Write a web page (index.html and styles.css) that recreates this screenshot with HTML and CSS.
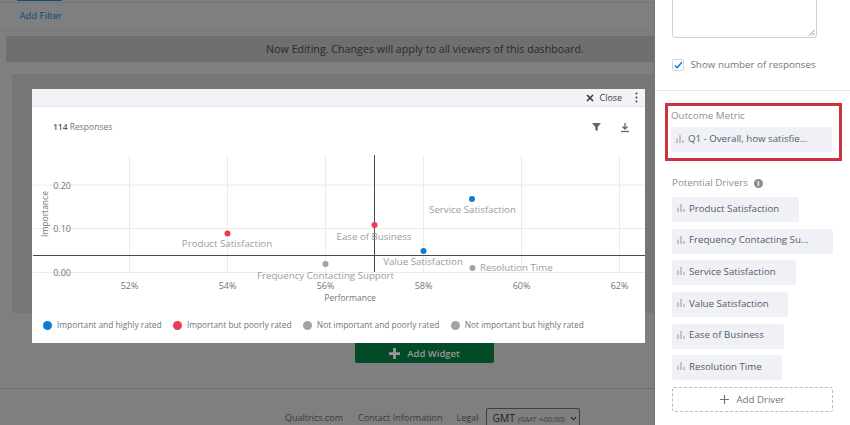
FILE: index.html
```html
<!DOCTYPE html>
<html lang="en">
<head>
<meta charset="utf-8">
<title>Dashboard</title>
<link rel="stylesheet" href="styles.css">
</head>
<body>
<div class="page">
  <main class="main">
    <div class="topline"><span class="tab"></span></div>
    <div class="filterbar"><a class="addfilter">Add Filter</a></div>
    <div class="banner">Now Editing. Changes will apply to all viewers of this dashboard.</div>
    <div class="canvas"></div>
    <div class="addrow">
      <div class="addwidget">
        <svg class="addplus" viewBox="0 0 12 12"><path d="M6 0v12M0 6h12" /></svg>
        <span>Add Widget</span>
      </div>
    </div>
    <footer class="footer">
      <span class="flink">Qualtrics.com</span>
      <span class="flink">Contact Information</span>
      <span class="flink">Legal</span>
      <span class="tz"><span class="tzmain">GMT</span> <i class="tzsub">(GMT +00:00)</i>
        <svg class="tzchev" viewBox="0 0 8 5"><path d="M1 1l3 3 3-3"/></svg>
      </span>
    </footer>
    <section class="modal">
      <div class="modalhead">
        <svg class="xicon" viewBox="0 0 8 8"><path d="M1 1l6 6M7 1l-6 6"/></svg>
        <span class="closetxt">Close</span>
        <svg class="kebab" viewBox="0 0 3 11"><circle cx="1.5" cy="1.5" r="1"/><circle cx="1.5" cy="5.5" r="1"/><circle cx="1.5" cy="9.5" r="1"/></svg>
      </div>
      <div class="modalsub">
        <span class="resp"><b>114</b> Responses</span>
        <svg class="funnel" viewBox="0 0 10 10"><path d="M0 1h9L5.7 5v4L3.300 8V5z"/></svg>
        <svg class="dl" viewBox="0 0 10 11"><path d="M5 1v5.500M2.500 4.500L5 7l2.500-2.500" class="dlarrow"/><path d="M1 9.500h8" class="dlarrow"/></svg>
      </div>
      <svg class="chart" width="613" height="175" viewBox="32 143 613 175">
        <g class="grid">
          <path d="M129.500 155V272M227.500 155V272M325.500 155V272M423.500 155V272M521.500 155V272M619.500 155V272"/>
          <path d="M33 185H645M33 228.500H645M33 272.500H645"/>
        </g>
        <g class="ticky">
          <text x="71" y="189" text-anchor="end">0.20</text>
          <text x="71" y="232" text-anchor="end">0.10</text>
          <text x="71" y="276" text-anchor="end">0.00</text>
        </g>
        <g class="ticky tickx">
          <text x="129.500" y="289" text-anchor="middle">52%</text>
          <text x="227.500" y="289" text-anchor="middle">54%</text>
          <text x="325.500" y="289" text-anchor="middle">56%</text>
          <text x="423.500" y="289" text-anchor="middle">58%</text>
          <text x="521.500" y="289" text-anchor="middle">60%</text>
          <text x="619.500" y="289" text-anchor="middle">62%</text>
        </g>
        <text class="axis" x="350" y="301" text-anchor="middle">Performance</text>
        <text class="axis" transform="translate(48 214) rotate(-90)" text-anchor="middle">Importance</text>
        <path class="cross" d="M33 255.500H645M374.500 155V272"/>
        <g class="pointlabels">
          <text x="472.500" y="213" text-anchor="middle">Service Satisfaction</text>
          <text x="227" y="247" text-anchor="middle">Product Satisfaction</text>
          <text x="374" y="240" text-anchor="middle">Ease of Business</text>
          <text x="423" y="265" text-anchor="middle">Value Satisfaction</text>
          <text x="325.500" y="279" text-anchor="middle">Frequency Contacting Support</text>
          <text x="480" y="271">Resolution Time</text>
        </g>
        <circle class="pblue" cx="472" cy="199" r="3"/>
        <circle class="pred" cx="227.500" cy="233.500" r="3"/>
        <circle class="pred" cx="374.500" cy="225" r="3"/>
        <circle class="pblue" cx="423.500" cy="251" r="3"/>
        <circle class="pgrey" cx="325.500" cy="264" r="3"/>
        <circle class="pgrey" cx="472.500" cy="268" r="3"/>
      </svg>
      <ul class="legend">
        <li class="litem"><span class="dot dblue"></span>Important and highly rated</li>
        <li class="litem"><span class="dot dred"></span>Important but poorly rated</li>
        <li class="litem"><span class="dot dgrey"></span>Not important and poorly rated</li>
        <li class="litem"><span class="dot dgrey"></span>Not important but highly rated</li>
      </ul>
    </section>
  </main>
  <aside class="side">
    <div class="sidetop">
      <div class="textarea">
        <svg class="grip" viewBox="0 0 7 7"><path d="M6.500 1L1 6.500M6.500 4L4 6.500"/></svg>
      </div>
      <label class="check">
        <span class="box"><svg viewBox="0 0 10 9"><path d="M1 5l2.500 2.500L9 1"/></svg></span>
        Show number of responses
      </label>
    </div>
    <div class="sidebody">
      <div class="outcome">
        <div class="seclabel">Outcome Metric</div>
        <div class="chip chip-full"><svg class="bars" viewBox="0 0 8 8"><path d="M1 3.500V8M4 0V8M7 5V8"/></svg>Q1 - Overall, how satisfie...</div>
      </div>
      <div class="drivers">
        <div class="seclabel">Potential Drivers <span class="info">i</span></div>
        <div class="chip w128"><svg class="bars" viewBox="0 0 8 8"><path d="M1 3.500V8M4 0V8M7 5V8"/></svg>Product Satisfaction</div>
        <div class="chip chip-full"><svg class="bars" viewBox="0 0 8 8"><path d="M1 3.500V8M4 0V8M7 5V8"/></svg>Frequency Contacting Su...</div>
        <div class="chip w125"><svg class="bars" viewBox="0 0 8 8"><path d="M1 3.500V8M4 0V8M7 5V8"/></svg>Service Satisfaction</div>
        <div class="chip w117"><svg class="bars" viewBox="0 0 8 8"><path d="M1 3.500V8M4 0V8M7 5V8"/></svg>Value Satisfaction</div>
        <div class="chip w112"><svg class="bars" viewBox="0 0 8 8"><path d="M1 3.500V8M4 0V8M7 5V8"/></svg>Ease of Business</div>
        <div class="chip w110"><svg class="bars" viewBox="0 0 8 8"><path d="M1 3.500V8M4 0V8M7 5V8"/></svg>Resolution Time</div>
        <div class="adddriver"><svg class="plus" viewBox="0 0 9 9"><path d="M4.500 0v9M0 4.500h9"/></svg>Add Driver</div>
      </div>
    </div>
  </aside>
</div>
</body>
</html>
```
FILE: styles.css
```css
* { box-sizing: border-box; }
html, body { margin: 0; padding: 0; }
body {
  width: 850px;
  height: 425px;
  overflow: hidden;
  font-family: "Open Sans", "Liberation Sans", sans-serif;
  color: #525c66;
}
.page { display: flex; width: 850px; height: 425px; }

/* Dimmed dashboard */
.main {
  position: relative;
  width: 655px;
  height: 425px;
  background: #7f7f7f;
  display: flex;
  flex-direction: column;
  border-right: 1px solid #757575;
}
.topline { height: 3px; border-bottom: 1px solid #757575; flex: none; }
.tab { display: block; width: 45px; height: 1px; margin-left: 17px; background: #0d4f80; }
.filterbar {
  height: 28px;
  flex: none;
  padding: 1px 0 0 19.500px;
  border-bottom: 1px solid #787878;
  font-size: 9.500px;
  line-height: 24px;
}
.addfilter { color: #0a4a78; }
.banner {
  flex: none;
  margin: 5px 0 0 6px;
  width: 648px;
  height: 26px;
  background: #6f6f6f;
  color: #2a2a2a;
  font-size: 10.700px;
  line-height: 26px;
  text-align: center;
  padding-left: 190px;
  white-space: nowrap;
}
.canvas {
  flex: none;
  height: 239px;
  margin: 12px 0 0 12px;
  background: #767676;
}
.addrow { flex: none; padding: 30px 0 0 355px; height: 75px; }
.addwidget {
  width: 139px;
  height: 20px;
  background: #034a27;
  border-radius: 0 0 2px 2px;
  color: #999;
  font-size: 9.500px;
  font-weight: 600;
  display: flex;
  align-items: center;
  justify-content: center;
  gap: 7px;
}
.addplus { width: 11px; height: 11px; fill: none; stroke: #999; stroke-width: 3; }
.footer {
  flex: none;
  border-top: 1px solid #6d6d6d;
  height: 37px;
  padding: 19px 0 0 285px;
  display: flex;
  align-items: flex-start;
  font-size: 9px;
  line-height: 19px;
  color: #3a3a3a;
}
.flink { margin-right: 15px; white-space: nowrap; }
.flink:nth-child(2) { margin-right: 14px; }
.flink:nth-child(3) { margin-right: 8px; }
.tz {
  display: flex;
  align-items: center;
  gap: 3px;
  width: 94px;
  height: 20px;
  padding-left: 5px;
  border: 1px solid #3f3f3f;
  border-radius: 2px;
  color: #222;
  white-space: nowrap;
}
.tzmain { font-size: 10.300px; }
.tzsub { font-size: 8px; color: #3a3a3a; }
.tzchev { width: 7px; height: 5px; fill: none; stroke: #222; stroke-width: 1.300; margin-left: 2px; }

/* Modal */
.modal {
  position: absolute;
  left: 32px;
  top: 89px;
  width: 613px;
  height: 254px;
  background: #fff;
  display: flex;
  flex-direction: column;
}
.modalhead {
  flex: none;
  height: 18px;
  background: #f2f2f7;
  border-bottom: 1px solid #e4e4e9;
  display: flex;
  align-items: center;
  justify-content: flex-end;
  padding-right: 7px;
  color: #3d3d3d;
  font-size: 8.900px;
}
.xicon { width: 8px; height: 8px; fill: none; stroke: #333; stroke-width: 1.500; margin-right: 6px; }
.closetxt { margin-right: 13px; }
.kebab { width: 3px; height: 11px; fill: #444; }
.modalsub {
  flex: none;
  height: 36px;
  display: flex;
  align-items: flex-start;
  padding: 13px 0 0 21px;
  font-size: 8.500px;
  line-height: 14px;
  color: #6f767d;
}
.resp { flex: 1; }
.resp b { font-weight: 600; color: #525c66; }
.funnel { width: 10px; height: 10px; fill: #666; margin: 2px 18px 0 0; }
.dl { width: 10px; height: 11px; margin: 2px 15px 0 0; }
.dlarrow { fill: none; stroke: #666; stroke-width: 1.300; }
.chart { display: block; flex: none; }
.grid path { fill: none; stroke: #ebebeb; stroke-width: 1; }
.ticky text { font-size: 9px; fill: #6f767d; }
.axis { font-size: 8.500px; fill: #6f767d; }
.cross { fill: none; stroke: #4a4a4a; stroke-width: 1; }
.pointlabels text { font-size: 9.700px; fill: #9b9b9b; }
.pblue { fill: #0a7ed6; }
.pred { fill: #ea3c56; }
.pgrey { fill: #a3a3a3; }
.legend {
  list-style: none;
  margin: 0;
  padding: 0 0 0 11px;
  display: flex;
  gap: 11.300px;
  font-size: 8.350px;
  line-height: 14px;
  color: #6f767d;
}
.litem { display: flex; align-items: center; gap: 5px; white-space: nowrap; }
.dot { width: 9px; height: 9px; border-radius: 50%; flex: none; }
.dblue { background: #0a7ed6; }
.dred { background: #ea3c56; }
.dgrey { background: #a3a3a3; }

/* Side panel */
.side { width: 195px; height: 425px; background: #fff; flex: none; }
.sidetop {
  height: 91px;
  padding: 0 0 0 17px;
  border-bottom: 1px solid #e4e4e9;
}
.textarea {
  position: relative;
  width: 145px;
  height: 38px;
  border: 1px solid #d0d0d4;
  border-top: 0;
  border-radius: 0 0 4px 4px;
}
.grip {
  position: absolute;
  right: 1px;
  bottom: 1px;
  width: 7px;
  height: 7px;
  fill: none;
  stroke: #777;
  stroke-width: 0.800;
}
.check {
  display: flex;
  align-items: center;
  gap: 6.500px;
  margin-top: 20px;
  font-size: 9.800px;
  line-height: 13px;
  color: #6f767d;
  white-space: nowrap;
}
.box {
  width: 12px;
  height: 12px;
  border: 1px solid #d5d7dc;
  border-radius: 2px;
  display: flex;
  align-items: center;
  justify-content: center;
}
.box svg { width: 9px; height: 8px; fill: none; stroke: #0a7ed6; stroke-width: 1.700; }
.sidebody { padding: 12px 6px 0 10px; }
.outcome {
  width: 177px;
  height: 58px;
  border: 3px solid #c9343e;
  padding: 2px 0 0 3px;
}
.seclabel {
  font-size: 9.800px;
  line-height: 16px;
  color: #8a9097;
  display: flex;
  align-items: center;
  gap: 6px;
  white-space: nowrap;
}
.outcome .chip { margin-top: 3px; padding-bottom: 2px; }
.chip {
  display: flex;
  align-items: center;
  height: 25px;
  margin-bottom: 6.700px;
  padding: 0 0 3px 5px;
  background: #f0f1f6;
  border-radius: 2px;
  font-size: 9.700px;
  color: #525c66;
  white-space: nowrap;
}
.chip-full { width: 161px; }
.w128 { width: 127px; }
.w125 { width: 124px; }
.w117 { width: 116px; }
.w112 { width: 112px; }
.w110 { width: 110px; }
.bars {
  width: 8px;
  height: 8px;
  margin-right: 4px;
  fill: none;
  stroke: #b2b5ba;
  stroke-width: 1.500;
}
.drivers { padding: 14px 0 0 7px; }
.drivers .seclabel { margin-bottom: 6px; }
.info {
  width: 9px;
  height: 9px;
  border-radius: 50%;
  background: #8a8d92;
  color: #fff;
  font-size: 7px;
  font-weight: 700;
  line-height: 9px;
  text-align: center;
}
.adddriver {
  width: 161px;
  height: 25px;
  padding-bottom: 1px;
  border: 1px dashed #b8bbc0;
  border-radius: 2px;
  display: flex;
  align-items: center;
  justify-content: center;
  gap: 7px;
  font-size: 9.700px;
  color: #6f767d;
}
.plus { width: 9px; height: 9px; fill: none; stroke: #6f767d; stroke-width: 1.200; }
```
